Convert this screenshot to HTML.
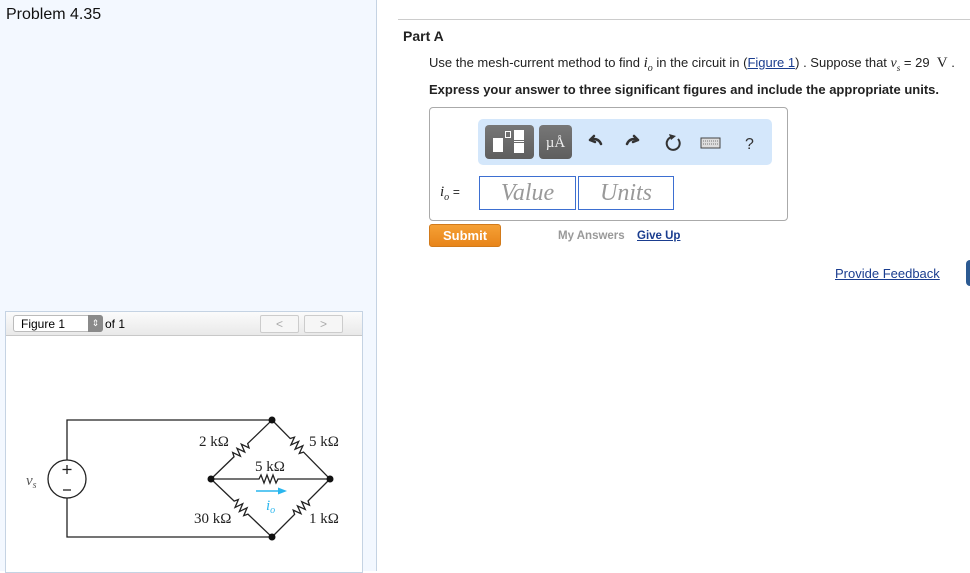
<!DOCTYPE html>
<html><head><meta charset="utf-8"><style>
*{margin:0;padding:0;box-sizing:border-box}
body{width:970px;height:571px;overflow:hidden;background:#fff;font-family:"Liberation Sans",Arial,sans-serif;position:relative}
.left{position:absolute;left:0;top:0;width:377px;height:571px;background:#f3f8ff;border-right:1px solid #c5d3e3}
.abs{position:absolute}
a{color:#1a3d8f}
.ser{font-family:"Liberation Serif",serif;font-style:italic}
</style></head><body>
<div class="left">
  <div class="abs" style="left:6px;top:6px;font-size:16px;color:#111">Problem 4.35</div>
  <div class="abs" style="left:5px;top:311px;width:358px;height:262px;border:1px solid #c5d3e3;background:#fff">
    <div style="height:24px;background:linear-gradient(#fbfbfb,#e9e9e9);border-bottom:1px solid #c8c8c8;position:relative">
      <div class="abs" style="left:7px;top:3px;width:90px;height:17px;border:1px solid #bbb;border-radius:3px;background:#fff;font-size:12px;padding:1px 0 0 7px">Figure 1</div>
      <div class="abs" style="left:82px;top:3px;width:15px;height:17px;background:#8a8a8a;border-radius:0 3px 3px 0;color:#fff;font-size:9px;text-align:center;line-height:17px">⇕</div>
      <div class="abs" style="left:99px;top:5px;font-size:12px">of 1</div>
      <div class="abs" style="left:254px;top:3px;width:39px;height:18px;border:1px solid #ccc;border-radius:2px;background:#f6f6f6;color:#aaa;font-size:12px;text-align:center;line-height:16px">&lt;</div>
      <div class="abs" style="left:298px;top:3px;width:39px;height:18px;border:1px solid #ccc;border-radius:2px;background:#f6f6f6;color:#aaa;font-size:12px;text-align:center;line-height:16px">&gt;</div>
    </div>
  </div>
  <svg class="abs" style="left:0;top:0" width="377" height="571">
    <g stroke="#222" stroke-width="1.3" fill="none">
      <polyline points="67,460 67,420 272,420"/>
      <polyline points="67,498 67,537 272,537"/>
      <circle cx="67" cy="479" r="19" fill="#fff"/>
      <line x1="67" y1="465" x2="67" y2="474"/><line x1="62.5" y1="469.5" x2="71.5" y2="469.5"/>
      <line x1="63" y1="490" x2="71" y2="490"/>
      <g transform="translate(211,479) rotate(-44)"><polyline points="0,0 32,0 34,-4 37,4 40,-4 43,4 46,-4 49,4 51,0 85,0"/></g>
      <g transform="translate(272,420) rotate(45.5)"><polyline points="0,0 26,0 28,-4 31,4 34,-4 37,4 40,-4 43,4 45,0 83,0"/></g>
      <g transform="translate(211,479) rotate(43.6)"><polyline points="0,0 32,0 34,-4 37,4 40,-4 43,4 46,-4 49,4 51,0 84,0"/></g>
      <g transform="translate(272,537) rotate(-45)"><polyline points="0,0 32,0 34,-4 37,4 40,-4 43,4 46,-4 49,4 51,0 82,0"/></g>
      <polyline points="211,479 259,479 261,475 264,483 267,475 270,483 273,475 276,483 278,479 330,479"/>
    </g>
    <g fill="#111"><circle cx="272" cy="420" r="3.5"/><circle cx="211" cy="479" r="3.5"/><circle cx="330" cy="479" r="3.5"/><circle cx="272" cy="537" r="3.5"/></g>
    <line x1="256" y1="491" x2="280" y2="491" stroke="#29b6ee" stroke-width="1.6"/>
    <polygon points="287,491 278,487.5 278,494.5" fill="#29b6ee"/>
    <g font-family="Liberation Serif,serif" font-size="15" fill="#222">
      <text x="199" y="446">2 kΩ</text>
      <text x="309" y="446">5 kΩ</text>
      <text x="255" y="471">5 kΩ</text>
      <text x="194" y="523">30 kΩ</text>
      <text x="309" y="523">1 kΩ</text>
      <text x="26" y="485" font-style="italic" fill="#555">v<tspan font-size="10" dy="3">s</tspan></text>
      <text x="266" y="510" font-style="italic" fill="#29b6ee">i<tspan font-size="10" dy="3">o</tspan></text>
    </g>
  </svg>
</div>

<div class="abs" style="left:398px;top:19px;width:572px;height:1px;background:#ccc"></div>
<div class="abs" style="left:403px;top:28px;font-size:14px;font-weight:bold;color:#222">Part A</div>
<div class="abs" style="left:429px;top:55px;font-size:13px;color:#222;white-space:nowrap">Use the mesh-current method to find <span class="ser" style="font-size:15px">i<sub style="font-size:10px">o</sub></span> in the circuit in (<a href="#">Figure 1</a>) . Suppose that <span class="ser" style="font-size:14px">v<sub style="font-size:9px">s</sub></span> = 29 &nbsp;<span style="font-family:'Liberation Serif',serif;font-size:15px">V</span> .</div>
<div class="abs" style="left:429px;top:82px;font-size:13px;font-weight:bold;color:#222;white-space:nowrap">Express your answer to three significant figures and include the appropriate units.</div>

<div class="abs" style="left:429px;top:107px;width:359px;height:114px;border:1px solid #aaa;border-radius:4px;background:#fff"></div>
<div class="abs" style="left:478px;top:119px;width:294px;height:46px;background:#d4e7fb;border-radius:5px"></div>
<div class="abs" style="left:485px;top:125px;width:49px;height:34px;background:linear-gradient(#777,#5e5e5e);border-radius:4px">
  <div class="abs" style="left:8px;top:13px;width:10px;height:14px;background:#fff"></div>
  <div class="abs" style="left:20px;top:6px;width:6px;height:7px;border:1px solid #fff"></div>
  <div class="abs" style="left:29px;top:5px;width:10px;height:10px;background:#fff"></div>
  <div class="abs" style="left:29px;top:16px;width:10px;height:1px;background:#fff"></div>
  <div class="abs" style="left:29px;top:18px;width:10px;height:10px;background:#fff"></div>
</div>
<div class="abs" style="left:539px;top:125px;width:33px;height:34px;background:linear-gradient(#777,#5e5e5e);border-radius:4px;color:#eee;font-family:'Liberation Serif',serif;font-size:15px;text-align:center;line-height:36px">µÅ</div>
<svg class="abs" style="left:585px;top:130px" width="180" height="26">
  <path d="M16 14 C14 9 9 8 5 10 M5 10 l4 -4 M5 10 l5 2" stroke="#333" stroke-width="2.5" fill="none" stroke-linecap="round"/>
  <path d="M42 14 C44 9 49 8 53 10 M53 10 l-4 -4 M53 10 l-5 2" stroke="#333" stroke-width="2.5" fill="none" stroke-linecap="round"/>
  <path d="M87 7 A6.5 6.5 0 1 0 93 9" stroke="#333" stroke-width="2" fill="none"/>
  <polygon points="84,4 91,6 86,10" fill="#333"/>
  <rect x="116" y="8" width="19" height="10" fill="#ddd" stroke="#444" stroke-width="1"/>
  <line x1="118" y1="11" x2="133" y2="11" stroke="#777" stroke-dasharray="1 1"/>
  <line x1="118" y1="14" x2="133" y2="14" stroke="#777" stroke-dasharray="1 1"/>
  <text x="160" y="19" font-family="Liberation Sans" font-size="16" fill="#333">?</text>
</svg>
<div class="abs ser" style="left:440px;top:184px;font-size:15px;color:#222">i<sub style="font-size:10px">o</sub> <span style="font-family:'Liberation Sans';font-style:normal;font-size:12px">=</span></div>
<div class="abs ser" style="left:479px;top:176px;width:97px;height:34px;border:1px solid #3d6fd1;color:#999;font-size:24px;text-align:center;line-height:32px">Value</div>
<div class="abs ser" style="left:578px;top:176px;width:96px;height:34px;border:1px solid #3d6fd1;color:#999;font-size:24px;text-align:center;line-height:32px">Units</div>

<div class="abs" style="left:429px;top:224px;width:72px;height:23px;background:linear-gradient(#f5a035,#e8851a);border:1px solid #d27a1a;border-radius:3px;color:#fff;font-weight:bold;font-size:13px;text-align:center;line-height:21px">Submit</div>
<div class="abs" style="left:558px;top:230px;font-size:11.5px;font-weight:bold;color:#999">My Answers</div>
<div class="abs" style="left:637px;top:230px;font-size:11.5px;font-weight:bold"><a href="#" style="color:#1a3d8f">Give Up</a></div>
<div class="abs" style="left:835px;top:266px;font-size:13px"><a href="#" style="color:#1a3d8f">Provide Feedback</a></div>
<div class="abs" style="left:966px;top:260px;width:10px;height:26px;background:#2c5a92;border-radius:4px"></div>
</body></html>
